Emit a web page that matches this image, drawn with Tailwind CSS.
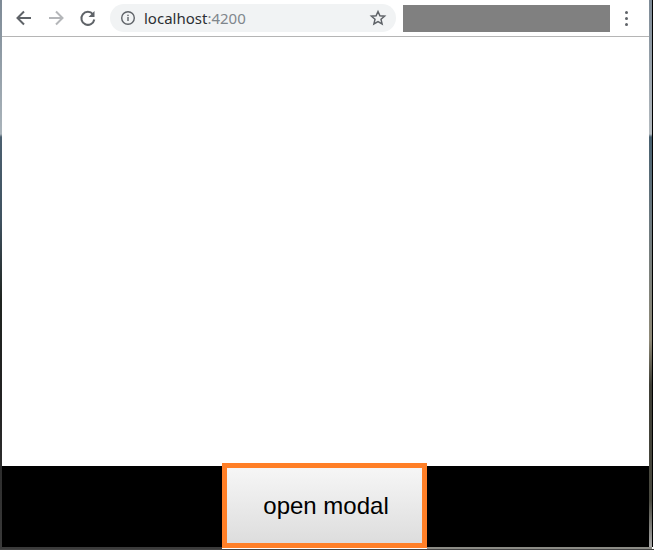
<!DOCTYPE html>
<html>
<head>
<meta charset="utf-8">
<script src="https://cdn.jsdelivr.net/npm/@tailwindcss/browser@4"></script>
</head>
<body class="bg-white overflow-hidden">
<div class="w-[654px] h-[551px] flex flex-col font-['Liberation_Sans',sans-serif]">
  <div class="flex flex-1 min-h-0">
    <div class="w-[2px] bg-[linear-gradient(to_bottom,#7d8a96_0,#aab4bb_134px,#4c6070_137px,#3f5260_220px,#1f2420_300px,#222_400px,#3a3a3a_547px)]"></div>
    <main class="flex-1 flex flex-col min-w-0">
      <header class="h-[37px] shrink-0 border-b border-[#b5b5b5] flex items-center relative">
        <svg class="ml-[12px] w-[20px] h-[20px]" viewBox="0 0 20 20" fill="none" stroke="#5f6368" stroke-width="2"><path d="M17 10H4M10 3.500 3.500 10l6.500 6.500"/></svg>
        <svg class="ml-[12px] w-[20px] h-[20px]" viewBox="0 0 20 20" fill="none" stroke="#b4b6b9" stroke-width="2"><path d="M3 10h13M10 3.500 16.500 10 10 16.500"/></svg>
        <svg class="ml-[12px] w-[20px] h-[20px]" viewBox="0 0 20 20" fill="none"><path d="M15 6.300A6.500 6.500 0 1 0 16.300 11.500" stroke="#5f6368" stroke-width="2"/><path d="M16.500 3v6h-6z" fill="#5f6368"/></svg>
        <div class="ml-[12px] w-[286px] h-[28px] rounded-full bg-[#f1f3f4] flex items-center">
          <svg class="ml-[10px] w-[16px] h-[16px]" viewBox="0 0 16 16" fill="none"><circle cx="8" cy="8" r="6.300" stroke="#5f6368" stroke-width="1.400"/><rect x="7.300" y="7" width="1.400" height="4" fill="#5f6368"/><rect x="7.300" y="4.700" width="1.400" height="1.400" fill="#5f6368"/></svg>
          <span class="ml-[8px] text-[15px] leading-none font-['Noto_Sans',sans-serif] text-[#2c2f33]">localhost<span class="text-[#7f868c]">:4200</span></span>
          <svg class="ml-auto mr-[9px] w-[18px] h-[18px]" viewBox="0 0 18 18" fill="none" stroke="#5f6368" stroke-width="1.500"><path d="M9 2.500l1.900 4.300 4.700.4-3.600 3.100 1.100 4.600L9 12.500l-4.100 2.400 1.100-4.600-3.600-3.100 4.700-.4z"/></svg>
        </div>
        <div class="ml-[7px] w-[207px] h-[27px] bg-[#808080]"></div>
        <div class="ml-[15px] flex flex-col gap-[3px]">
          <span class="w-[3px] h-[3px] rounded-full bg-[#5f6368]"></span>
          <span class="w-[3px] h-[3px] rounded-full bg-[#5f6368]"></span>
          <span class="w-[3px] h-[3px] rounded-full bg-[#5f6368]"></span>
        </div>
      </header>
      <div class="flex-1 bg-white"></div>
      <div class="h-[81px] shrink-0 bg-black flex justify-center pr-[3px]">
        <button class="w-[205px] h-[85px] -mt-[3px] pl-[4px] shrink-0 border-[5px] border-[#ff7f27] bg-[linear-gradient(to_bottom,#f6f6f6,#dddddd)] text-[24px] text-black">open modal</button>
      </div>
    </main>
    <div class="w-[3px] bg-[linear-gradient(to_bottom,#7d8a96_0,#b4bbc0_134px,#48606f_137px,#6d7a80_220px,#8f8a78_340px,#3f3f36_385px,#4a4a40_500px,#a8a8a8_547px)]"></div>
    <div class="w-[1px] bg-black"></div>
    <div class="w-[1px] bg-white"></div>
  </div>
  <div class="h-[2px] shrink-0 flex">
    <div class="w-[222px] bg-[#3a3a3a]"></div>
    <div class="w-[205px] bg-[#ff7f27] h-px"></div>
    <div class="flex-1 bg-[#8c8c86] mr-[2px]"></div>
  </div>
  <div class="h-px shrink-0 bg-[#444]"></div>
  <div class="h-px shrink-0 bg-white"></div>
</div>
</body>
</html>
